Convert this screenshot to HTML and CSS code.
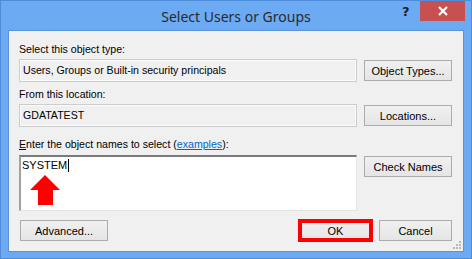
FILE: index.html
```html
<!DOCTYPE html>
<html>
<head>
<meta charset="utf-8">
<link rel="stylesheet" href="styles.css">
</head>
<body>
<div class="window">
  <div class="titlebar">
    <div class="title">Select Users or Groups</div>
    <div class="help">?</div>
    <div class="close">
      <svg width="12" height="10" viewBox="0 0 12 10"><path d="M2 1 L10 9 M10 1 L2 9" stroke="#fff" stroke-width="2.2" fill="none"/></svg>
    </div>
  </div>
  <div class="client">
    <div class="label">Select this object type:</div>
    <div class="row">
      <div class="field ro">Users, Groups or Built-in security principals</div>
      <div class="btn side">Object Types...</div>
    </div>
    <div class="label l2">From this location:</div>
    <div class="row">
      <div class="field ro">GDATATEST</div>
      <div class="btn side">Locations...</div>
    </div>
    <div class="label l3"><u>E</u>nter the object names to select (<span class="link">examples</span>):</div>
    <div class="row top">
      <div class="field edit"><span class="value">SYSTEM</span><span class="caret"></span>
        <svg class="arrow" width="32" height="32" viewBox="0 0 32 32"><path d="M15 0 L30 15 L23 15 L23 30 L8 30 L8 15 L0 15 Z" fill="#ff0000"/></svg>
      </div>
      <div class="btn side check">Check Names</div>
    </div>
    <div class="bottom">
      <div class="btn adv">Advanced...</div>
      <div class="spacer"></div>
      <div class="btn dlg ok">OK</div>
      <div class="btn dlg">Cancel</div>
    </div>
    <div class="grip">
      <i></i><i></i><i></i><i></i><i></i><i></i>
    </div>
  </div>
</div>
</body>
</html>
```
FILE: styles.css
```css
* { box-sizing: border-box; }
html, body { margin: 0; padding: 0; }
body {
  width: 472px;
  height: 259px;
  overflow: hidden;
  font-family: "Liberation Sans", Arial, sans-serif;
  font-size: 10.6px;
  color: #000;
}
.window {
  width: 472px;
  height: 259px;
  background: #6cabf4;
  border: 1px solid #4f8ddb;
  display: flex;
  flex-direction: column;
}
.titlebar {
  height: 29px;
  position: relative;
  display: flex;
  align-items: center;
  justify-content: center;
  flex: none;
}
.title {
  font-family: "Noto Sans", "Open Sans", sans-serif;
  font-size: 14px;
  color: #2a2a2a;
  margin-top: 1px;
}
.help {
  position: absolute;
  left: 401px;
  top: 3px;
  font-family: "DejaVu Sans", sans-serif;
  font-weight: bold;
  font-size: 13px;
  color: #1e1e1e;
}
.close {
  position: absolute;
  left: 419px;
  top: 0;
  width: 45px;
  height: 20px;
  background: #c75050;
  display: flex;
  align-items: center;
  justify-content: center;
}
.client {
  margin: 0 7px 0 7px;
  height: 222px;
  background: #f0f0f0;
  border: 1px solid #5a93d8;
  padding: 12px 11px 0 10px;
  position: relative;
}
.label {
  height: 13px;
  line-height: 13px;
  white-space: nowrap;
  color: #000;
}
.l2 { margin-top: 6px; }
.l3 { margin-top: 11px; }
.link { color: #0066cc; text-decoration: underline; }
.row {
  display: flex;
  align-items: center;
  gap: 7px;
  margin-top: 3px;
}
.row.top { align-items: flex-start; margin-top: 4px; }
.field {
  width: 338px;
  flex: none;
}
.field.ro {
  height: 23px;
  line-height: 21px;
  border: 1px solid #cccccc;
  padding-left: 3px;
  background: #f0f0f0;
  box-shadow: inset 0 0 0 1px #fbfbfb;
}
.field.edit {
  height: 56px;
  background: #fff;
  border-style: solid;
  border-width: 2px 1px 1px 2px;
  border-color: #7a7a7a #e3e3e3 #e3e3e3 #a0a0a0;
  padding: 2px 0 0 1px;
  position: relative;
  display: flex;
  align-items: flex-start;
}
.value { line-height: 13px; font-size: 11px; }
.caret {
  display: inline-block;
  width: 1px;
  height: 13px;
  background: #000;
  margin-left: 1px;
}
.arrow {
  position: absolute;
  left: 9px;
  top: 18px;
}
.btn {
  height: 21px;
  border: 1px solid #acacac;
  background: linear-gradient(#f0f0f0, #e5e5e5);
  display: flex;
  align-items: center;
  justify-content: center;
  white-space: nowrap;
  color: #000;
  font-size: 11px;
}
.btn.side { width: 88px; }
.check { margin-top: 1px; }
.bottom {
  display: flex;
  margin-top: 9px;
  gap: 7px;
  margin-left: 1px;
}
.adv { width: 88px; }
.spacer { flex: 1; }
.dlg { width: 73px; }
.ok {
  outline: 4px solid #ff0000;
  outline-offset: -3px;
}
.grip {
  position: absolute;
  right: 2px;
  bottom: 2px;
  width: 10px;
  height: 10px;
}
.grip i {
  position: absolute;
  width: 2px;
  height: 2px;
  background: #b8b8b8;
}
.grip i:nth-child(1) { right: 0; bottom: 0; }
.grip i:nth-child(2) { right: 3px; bottom: 0; }
.grip i:nth-child(3) { right: 6px; bottom: 0; }
.grip i:nth-child(4) { right: 0; bottom: 3px; }
.grip i:nth-child(5) { right: 3px; bottom: 3px; }
.grip i:nth-child(6) { right: 0; bottom: 6px; }
```
